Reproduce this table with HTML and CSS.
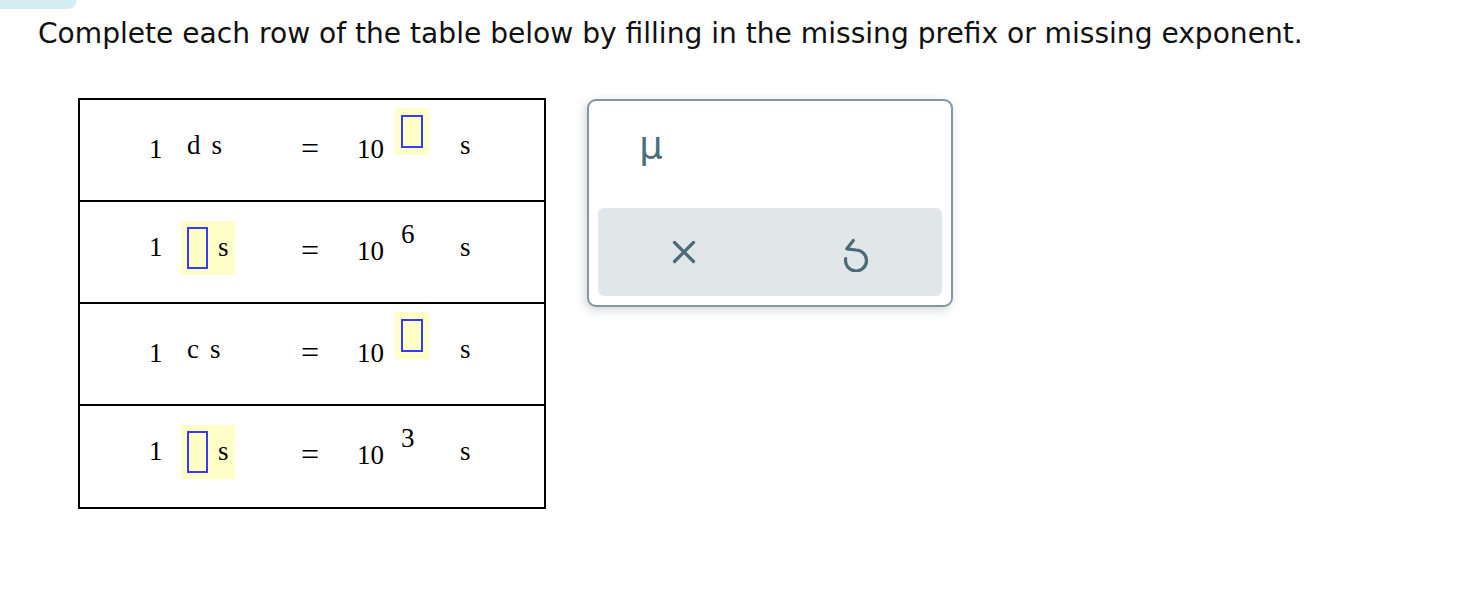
FILE: index.html
```html
<!DOCTYPE html>
<html lang="en">
<head>
<meta charset="utf-8">
<title>Prefixes and exponents</title>
<link rel="stylesheet" href="styles.css">
</head>
<body>
<div class="tab"></div>
<p class="prompt">Complete each row of the table below by filling in the missing prefix or missing exponent.</p>
<div class="work">
  <div class="units">
    <div class="row">
      <span class="num">1</span>
      <span class="pre"><span>d</span><span>s</span></span>
      <span class="eq">=</span>
      <span class="num">10</span>
      <span class="exp"><span class="slot slot-exp"><span class="blank"></span></span></span>
      <span class="unit">s</span>
    </div>
    <div class="row">
      <span class="num lift">1</span>
      <span class="prebox"><span class="slot slot-pre"><span class="blank"></span><span class="s">s</span></span></span>
      <span class="eq">=</span>
      <span class="num">10</span>
      <span class="sup">6</span>
      <span class="unit">s</span>
    </div>
    <div class="row">
      <span class="num">1</span>
      <span class="pre"><span>c</span><span>s</span></span>
      <span class="eq">=</span>
      <span class="num">10</span>
      <span class="exp"><span class="slot slot-exp"><span class="blank"></span></span></span>
      <span class="unit">s</span>
    </div>
    <div class="row">
      <span class="num lift">1</span>
      <span class="prebox"><span class="slot slot-pre"><span class="blank"></span><span class="s">s</span></span></span>
      <span class="eq">=</span>
      <span class="num">10</span>
      <span class="sup">3</span>
      <span class="unit">s</span>
    </div>
  </div>
  <div class="card">
    <div class="keys">
      <div class="key">μ</div>
    </div>
    <div class="actions">
      <div class="act">
        <svg width="24" height="24" viewBox="0 0 24 24" aria-label="clear">
          <path d="M2.5 2.5 L21.5 21.5 M21.5 2.5 L2.5 21.5" fill="none" stroke="#4b6b78" stroke-width="3.2" stroke-linecap="round"/>
        </svg>
      </div>
      <div class="act">
        <svg class="undo" width="30" height="36" viewBox="0 0 30 36" aria-label="undo">
          <path d="M12.3 4.5 L5.8 12.8 L15 14 A10.5 10.5 0 1 1 4.66 22.68" fill="none" stroke="#4b6b78" stroke-width="3.2" stroke-linecap="round" stroke-linejoin="round"/>
        </svg>
      </div>
    </div>
  </div>
</div>
</body>
</html>
```
FILE: styles.css
```css
body {
  margin: 0;
  background: #fff;
  font-family: "DejaVu Sans", Verdana, sans-serif;
  color: #000;
}

.tab {
  width: 77px;
  height: 9px;
  background: #d7edf4;
  border-bottom-right-radius: 9px;
}

.prompt {
  margin: 9px 0 0 38px;
  font-size: 28.1px;
  line-height: 32px;
  color: #111;
}

.work {
  display: flex;
  align-items: flex-start;
  gap: 41px;
  margin: 48px 0 0 78px;
}

.units {
  border: 2px solid #000;
  width: 464px;
  font-family: "Liberation Serif", "Times New Roman", serif;
  font-size: 27px;
  line-height: 27px;
}

.row {
  display: grid;
  grid-template-columns: 32px 120px 56px 38px 64px 1fr;
  align-items: start;
  height: 100px;
  padding-left: 69px;
}

.row:last-child {
  height: 101px;
}

.row + .row {
  border-top: 2px solid #000;
}

.num {
  margin-top: 36px;
}

.num.lift {
  margin-top: 32px;
}

.pre {
  display: flex;
  gap: 11px;
  margin-top: 32px;
  padding-left: 6px;
}

.eq {
  font-size: 32px;
  line-height: 32px;
  margin-top: 32px;
}

.unit {
  margin-top: 32px;
  padding-left: 1px;
}

.sup {
  margin-top: 19px;
  padding-left: 6px;
}

.exp,
.prebox {
  display: flex;
  align-items: flex-start;
}

.slot {
  display: flex;
  align-items: flex-start;
  background: #ffffc8;
}

.slot-exp {
  margin-top: 8px;
  padding: 7px 6px;
}

.slot-pre {
  margin-top: 19px;
  padding: 6px 6px 6px 6px;
  gap: 10px;
}

.slot-pre .s {
  margin-top: 7px;
}

.blank {
  display: block;
  box-sizing: border-box;
  border: 2px solid #3a3aff;
}

.slot-exp .blank {
  width: 22px;
  height: 33px;
}

.slot-pre .blank {
  width: 21px;
  height: 42px;
}

.card {
  box-sizing: border-box;
  width: 366px;
  height: 208px;
  margin-top: 1px;
  padding: 9px;
  border: 2px solid #8497a0;
  border-radius: 9px;
  background: #fff;
  box-shadow: -2px 3px 10px rgba(70, 90, 100, 0.25);
  display: flex;
  flex-direction: column;
  gap: 10px;
}

.keys {
  display: flex;
  height: 88px;
}

.key {
  box-sizing: border-box;
  width: 106px;
  height: 88px;
  padding-top: 18px;
  text-align: center;
  font-size: 37px;
  line-height: 36px;
  color: #4d6d7a;
}

.actions {
  display: flex;
  height: 88px;
  background: #e1e6e9;
  border-radius: 6px;
}

.act {
  flex: 1;
  display: flex;
  align-items: center;
  justify-content: center;
}

.undo {
  margin-top: 3px;
}
```
